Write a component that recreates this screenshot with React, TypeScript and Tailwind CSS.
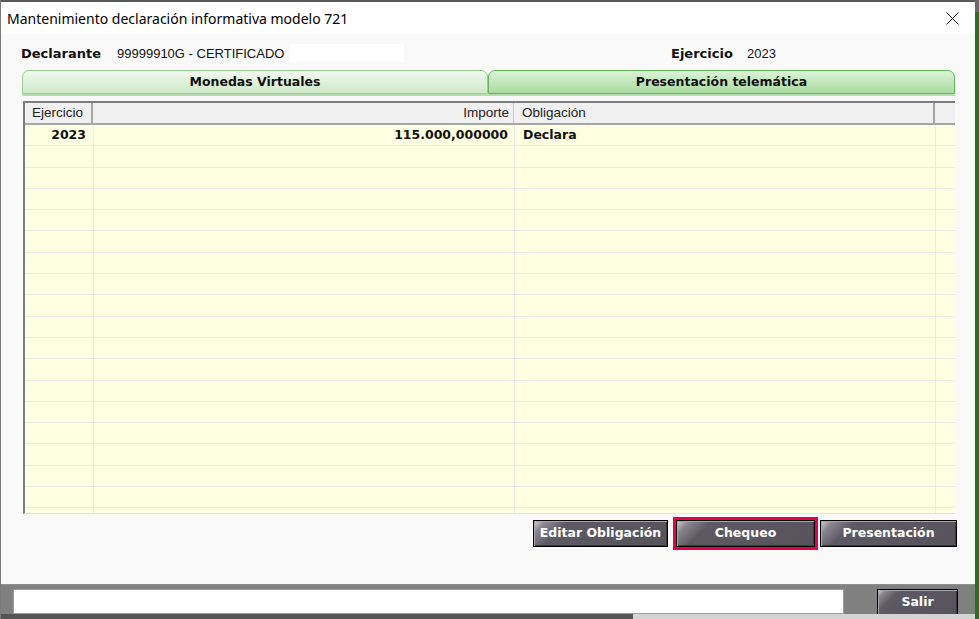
import React from "react";

const dv = { fontFamily: '"DejaVu Sans", sans-serif' };
const lib = { fontFamily: '"Liberation Sans", Arial, sans-serif' };

function WinButton({ label, w }: { label: string; w: string }) {
  return (
    <div
      className={`${w} h-[27px] border border-black flex items-center justify-center text-white font-bold text-[12.5px] bg-[linear-gradient(135deg,#d6d4da_0%,#8a8790_8%,#5c5962_22%,#57535d_100%)] shadow-[inset_1px_1px_0_#a8a5ae,inset_-1px_-1px_0_#3b3940]`}
      style={dv}
    >
      {label}
    </div>
  );
}

export default function App() {
  const rows = Array.from({ length: 19 });
  return (
    <div className="w-[979px] h-[619px] flex bg-[#2f6b1f] overflow-hidden">
      <div className="w-[975px] h-full flex flex-col border-l border-[#7a7a7a]">
        <div className="h-[2px] bg-[#5a5a5a]" />
        {/* Title bar */}
        <div className="h-[32px] bg-white flex items-center justify-between pl-[6px] pr-[16px]">
          <span className="text-[14px] text-black" style={{ fontFamily: '"Noto Sans", sans-serif' }}>
            Mantenimiento declaración informativa modelo 721
          </span>
          <svg width="13" height="13" viewBox="0 0 13 13" className="mt-[1px]">
            <path d="M0.5 0.5 L12.5 12.5 M12.5 0.5 L0.5 12.5" stroke="#111" strokeWidth="1" />
          </svg>
        </div>
        {/* Body */}
        <div className="flex-1 bg-[#f9f9f9] flex flex-col pl-[21px] pr-[18px] pt-[10px]">
          <div className="h-[18px] flex items-center -ml-[1px]">
            <span className="w-[96px] font-bold text-[13px] text-[#111] mt-[1px]" style={dv}>Declarante</span>
            <span className="w-[173px] text-[13px] text-[#111] mt-[1px]" style={lib}>99999910G - CERTIFICADO</span>
            <div className="w-[114px] h-[18px] bg-white" />
            <div className="w-[267px]" />
            <span className="w-[76px] font-bold text-[13px] text-[#111] mt-[1px]" style={dv}>Ejercicio</span>
            <span className="text-[13px] text-[#111] mt-[1px]" style={lib}>2023</span>
          </div>
          {/* Tabs */}
          <div className="mt-[8px] h-[26px] w-[933px] flex border-b-[2px] border-[#b5deae]">
            <div
              className="w-[466px] h-[24px] pt-[1px] rounded-t-[7px] border border-[#96cf8e] bg-[linear-gradient(#f1f9ef,#cfe9c8)] flex items-center justify-center font-bold text-[12.5px] text-[#111]"
              style={dv}
            >
              Monedas Virtuales
            </div>
            <div
              className="w-[467px] h-[24px] pt-[1px] rounded-t-[7px] border border-[#5fb65a] bg-[linear-gradient(#dcf2d6,#a9dca0)] flex items-center justify-center font-bold text-[12.5px] text-[#111]"
              style={dv}
            >
              Presentación telemática
            </div>
          </div>
          {/* Grid */}
          <div className="mt-[5px] ml-[1px] w-[932px] h-[413px] border-l-2 border-t-2 border-[#7c7c7c] border-b border-b-[#e4e4e4] bg-[#ffffe1] overflow-hidden flex flex-col">
            <div className="h-[22px] shrink-0 flex bg-[#f0f0f0] border-b-2 border-[#a6a6a6] text-[13.5px] text-[#222]" style={lib}>
              <div className="w-[68px] border-r-2 border-[#a6a6a6] pl-[7px] flex items-center">Ejercicio</div>
              <div className="w-[421px] border-r border-[#c8c8c8] pr-[4px] flex items-center justify-end">Importe</div>
              <div className="w-[421px] border-r-2 border-[#a6a6a6] pl-[8px] flex items-center">Obligación</div>
              <div className="flex-1" />
            </div>
            {rows.map((_, i) => (
              <div key={i} className="h-[21.3px] shrink-0 flex border-b border-[#e9e9ea] font-bold text-[12.5px] text-[#111]" style={dv}>
                <div className="w-[69px] border-r border-[#e9e9ea] pr-[7px] flex items-center justify-end">{i === 0 ? "2023" : ""}</div>
                <div className="w-[421px] border-r border-[#e9e9ea] pr-[6px] flex items-center justify-end">{i === 0 ? "115.000,000000" : ""}</div>
                <div className="w-[421px] border-r border-[#e9e9ea] pl-[8px] flex items-center">{i === 0 ? "Declara" : ""}</div>
                <div className="flex-1" />
              </div>
            ))}
          </div>
          {/* Buttons */}
          <div className="mt-[3px] flex justify-end items-center">
            <WinButton label="Editar Obligación" w="w-[135px]" />
            <div className="ml-[5px] border-[3px] border-[#e2034a]">
              <WinButton label="Chequeo" w="w-[139px]" />
            </div>
            <div className="ml-[2px]">
              <WinButton label="Presentación" w="w-[137px]" />
            </div>
          </div>
        </div>
        {/* Status strip */}
        <div className="h-[30px] bg-[#808080] border-t border-[#8e8e8e] flex items-start pt-[4px] pl-[12px] pr-[16px]">
          <div className="w-[831px] h-[25px] bg-white border border-[#a0a0a0]" />
          <div className="ml-[33px]">
            <WinButton label="Salir" w="w-[81px]" />
          </div>
        </div>
        <div className="h-[5px] flex">
          <div className="w-[632px] bg-[#555555]" />
          <div className="flex-1 bg-[#d4d4d4]" />
        </div>
      </div>
      <div className="flex-1 flex flex-col">
        <div className="h-[12px] bg-[#6a6a6a]" />
        <div className="flex-1 bg-[#2f6b1f]" />
      </div>
    </div>
  );
}
